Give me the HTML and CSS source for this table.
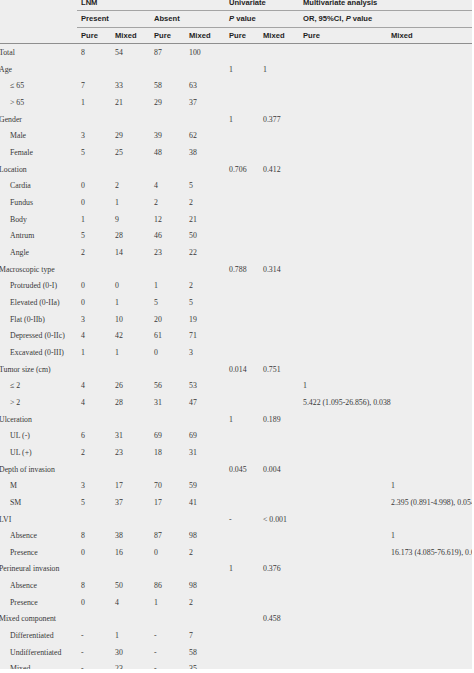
FILE: index.html
```html
<!DOCTYPE html>
<html>
<head>
<meta charset="utf-8">
<link rel="stylesheet" href="styles.css">
</head>
<body>
<div class="sheet">
<div class="table">
  <div class="head">
    <div class="corner"></div>
    <div class="g-lnm line1"><span>LNM</span></div>
    <div class="g-uni line1"><span>Univariate</span></div>
    <div class="g-multi line1"><span>Multivariate analysis</span></div>
    <div class="g-present line2"><span>Present</span></div>
    <div class="g-absent line2"><span>Absent</span></div>
    <div class="g-pval line2"><span><i>P</i> value</span></div>
    <div class="g-or line2"><span>OR, 95%CI, <i>P</i> value</span></div>
    <div class="h3 c1"><span>Pure</span></div>
    <div class="h3 c2"><span>Mixed</span></div>
    <div class="h3 c3"><span>Pure</span></div>
    <div class="h3 c4"><span>Mixed</span></div>
    <div class="h3 c5"><span>Pure</span></div>
    <div class="h3 c6"><span>Mixed</span></div>
    <div class="h3 c7"><span>Pure</span></div>
    <div class="h3 c8"><span>Mixed</span></div>
  </div>

  <div class="row"><span class="lbl">Total</span><span class="c1">8</span><span class="c2">54</span><span class="c3">87</span><span class="c4">100</span></div>
  <div class="row"><span class="lbl">Age</span><span class="c5">1</span><span class="c6">1</span></div>
  <div class="row"><span class="lbl sub">≤ 65</span><span class="c1">7</span><span class="c2">33</span><span class="c3">58</span><span class="c4">63</span></div>
  <div class="row"><span class="lbl sub">&gt; 65</span><span class="c1">1</span><span class="c2">21</span><span class="c3">29</span><span class="c4">37</span></div>
  <div class="row"><span class="lbl">Gender</span><span class="c5">1</span><span class="c6">0.377</span></div>
  <div class="row"><span class="lbl sub">Male</span><span class="c1">3</span><span class="c2">29</span><span class="c3">39</span><span class="c4">62</span></div>
  <div class="row"><span class="lbl sub">Female</span><span class="c1">5</span><span class="c2">25</span><span class="c3">48</span><span class="c4">38</span></div>
  <div class="row"><span class="lbl">Location</span><span class="c5">0.706</span><span class="c6">0.412</span></div>
  <div class="row"><span class="lbl sub">Cardia</span><span class="c1">0</span><span class="c2">2</span><span class="c3">4</span><span class="c4">5</span></div>
  <div class="row"><span class="lbl sub">Fundus</span><span class="c1">0</span><span class="c2">1</span><span class="c3">2</span><span class="c4">2</span></div>
  <div class="row"><span class="lbl sub">Body</span><span class="c1">1</span><span class="c2">9</span><span class="c3">12</span><span class="c4">21</span></div>
  <div class="row"><span class="lbl sub">Antrum</span><span class="c1">5</span><span class="c2">28</span><span class="c3">46</span><span class="c4">50</span></div>
  <div class="row"><span class="lbl sub">Angle</span><span class="c1">2</span><span class="c2">14</span><span class="c3">23</span><span class="c4">22</span></div>
  <div class="row"><span class="lbl">Macroscopic type</span><span class="c5">0.788</span><span class="c6">0.314</span></div>
  <div class="row"><span class="lbl sub">Protruded (0-I)</span><span class="c1">0</span><span class="c2">0</span><span class="c3">1</span><span class="c4">2</span></div>
  <div class="row"><span class="lbl sub">Elevated (0-IIa)</span><span class="c1">0</span><span class="c2">1</span><span class="c3">5</span><span class="c4">5</span></div>
  <div class="row"><span class="lbl sub">Flat (0-IIb)</span><span class="c1">3</span><span class="c2">10</span><span class="c3">20</span><span class="c4">19</span></div>
  <div class="row"><span class="lbl sub">Depressed (0-IIc)</span><span class="c1">4</span><span class="c2">42</span><span class="c3">61</span><span class="c4">71</span></div>
  <div class="row"><span class="lbl sub">Excavated (0-III)</span><span class="c1">1</span><span class="c2">1</span><span class="c3">0</span><span class="c4">3</span></div>
  <div class="row"><span class="lbl">Tumor size (cm)</span><span class="c5">0.014</span><span class="c6">0.751</span></div>
  <div class="row"><span class="lbl sub">≤ 2</span><span class="c1">4</span><span class="c2">26</span><span class="c3">56</span><span class="c4">53</span><span class="c7">1</span></div>
  <div class="row"><span class="lbl sub">&gt; 2</span><span class="c1">4</span><span class="c2">28</span><span class="c3">31</span><span class="c4">47</span><span class="c7">5.422 (1.095-26.856), 0.038</span></div>
  <div class="row"><span class="lbl">Ulceration</span><span class="c5">1</span><span class="c6">0.189</span></div>
  <div class="row"><span class="lbl sub">UL (-)</span><span class="c1">6</span><span class="c2">31</span><span class="c3">69</span><span class="c4">69</span></div>
  <div class="row"><span class="lbl sub">UL (+)</span><span class="c1">2</span><span class="c2">23</span><span class="c3">18</span><span class="c4">31</span></div>
  <div class="row"><span class="lbl">Depth of invasion</span><span class="c5">0.045</span><span class="c6">0.004</span></div>
  <div class="row"><span class="lbl sub">M</span><span class="c1">3</span><span class="c2">17</span><span class="c3">70</span><span class="c4">59</span><span class="c8">1</span></div>
  <div class="row"><span class="lbl sub">SM</span><span class="c1">5</span><span class="c2">37</span><span class="c3">17</span><span class="c4">41</span><span class="c8">2.395 (0.891-4.998), 0.054</span></div>
  <div class="row"><span class="lbl">LVI</span><span class="c5">-</span><span class="c6">&lt; 0.001</span></div>
  <div class="row"><span class="lbl sub">Absence</span><span class="c1">8</span><span class="c2">38</span><span class="c3">87</span><span class="c4">98</span><span class="c8">1</span></div>
  <div class="row"><span class="lbl sub">Presence</span><span class="c1">0</span><span class="c2">16</span><span class="c3">0</span><span class="c4">2</span><span class="c8">16.173 (4.085-76.619), 0.001</span></div>
  <div class="row"><span class="lbl">Perineural invasion</span><span class="c5">1</span><span class="c6">0.376</span></div>
  <div class="row"><span class="lbl sub">Absence</span><span class="c1">8</span><span class="c2">50</span><span class="c3">86</span><span class="c4">98</span></div>
  <div class="row"><span class="lbl sub">Presence</span><span class="c1">0</span><span class="c2">4</span><span class="c3">1</span><span class="c4">2</span></div>
  <div class="row"><span class="lbl">Mixed component</span><span class="c6">0.458</span></div>
  <div class="row"><span class="lbl sub">Differentiated</span><span class="c1">-</span><span class="c2">1</span><span class="c3">-</span><span class="c4">7</span></div>
  <div class="row"><span class="lbl sub">Undifferentiated</span><span class="c1">-</span><span class="c2">30</span><span class="c3">-</span><span class="c4">58</span></div>
  <div class="row"><span class="lbl sub">Mixed</span><span class="c1">-</span><span class="c2">23</span><span class="c3">-</span><span class="c4">35</span></div>
</div>
</div>
</body>
</html>
```

FILE: styles.css
```css
html, body {
  margin: 0;
  padding: 0;
  background: #ffffff;
}

.sheet {
  width: 472px;
  height: 669px;
  background: #eeeeee;
  overflow: hidden;
}

.table {
  margin-top: -5.67px;
  font-family: "Liberation Serif", "Times New Roman", serif;
  font-size: 7.8px;
  color: #383838;
}

.head,
.row {
  display: grid;
  grid-template-columns: 77px 34px 39px 35px 40px 34px 40px 88px 85px;
}

.head {
  grid-template-rows: 16.667px 16.667px 16.667px;
  font-family: "Liberation Sans", Arial, sans-serif;
  font-weight: bold;
  font-size: 7.6px;
  color: #1e1e1e;
}

.head > div {
  display: flex;
  align-items: center;
  box-sizing: border-box;
  padding-left: 4px;
  white-space: nowrap;
}

.corner {
  grid-column: 1;
  grid-row: 1 / 4;
  border-bottom: 1.5px solid #8e8e8e;
}

.line1 {
  grid-row: 1;
  border-bottom: 1px solid #a4a4a4;
}

.line2 {
  grid-row: 2;
  border-bottom: 1px solid #a4a4a4;
}

.h3 {
  grid-row: 3;
  border-bottom: 1.5px solid #8e8e8e;
}

.g-lnm { grid-column: 2 / 6; }
.g-uni { grid-column: 6 / 8; }
.g-multi { grid-column: 8 / 10; }
.g-present { grid-column: 2 / 4; }
.g-absent { grid-column: 4 / 6; }
.g-pval { grid-column: 6 / 8; }
.g-or { grid-column: 8 / 10; }

.row {
  height: 16.667px;
  align-items: center;
}

.row > span {
  grid-row: 1;
  padding-left: 4px;
  white-space: nowrap;
}

.row > .lbl {
  grid-column: 1;
  padding-left: 0;
  margin-left: -1px;
}

.row > .sub {
  padding-left: 11px;
}

.c1 { grid-column: 2; }
.c2 { grid-column: 3; }
.c3 { grid-column: 4; }
.c4 { grid-column: 5; }
.c5 { grid-column: 6; }
.c6 { grid-column: 7; }
.c7 { grid-column: 8; }
.c8 { grid-column: 9; }
```
